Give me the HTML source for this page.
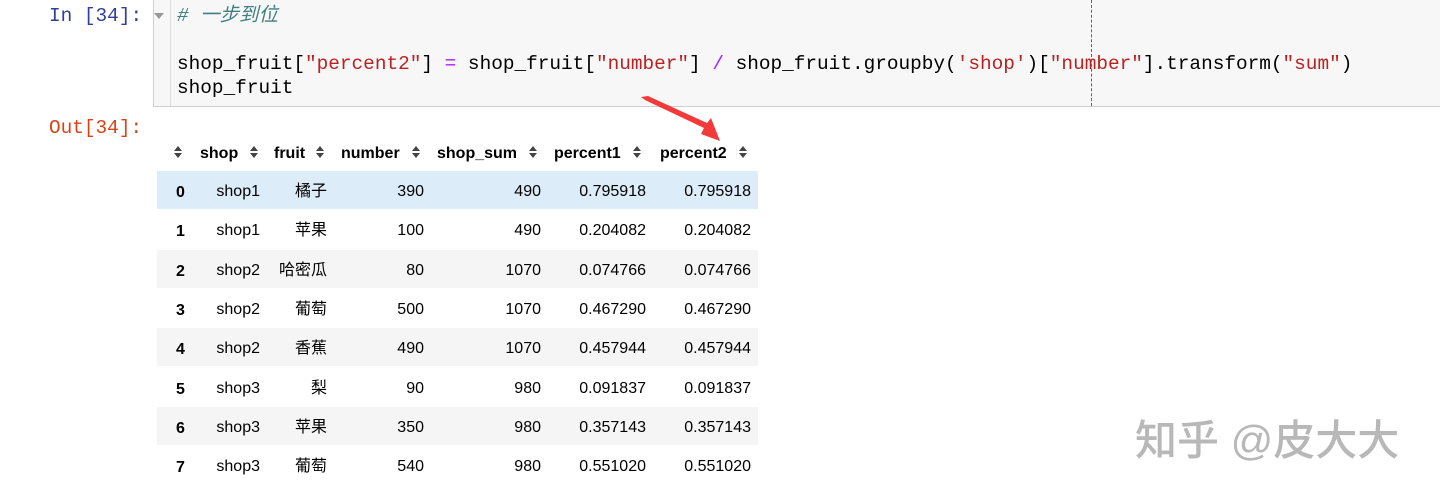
<!DOCTYPE html>
<html><head><meta charset="utf-8"><style>
body{margin:0;width:1440px;height:497px;background:#fff;position:relative;overflow:hidden;font-family:"Liberation Sans","Noto Sans CJK SC",sans-serif}
.mono{font-family:"Liberation Mono","Noto Sans CJK SC",monospace;font-size:19.4px;line-height:24px;position:absolute;white-space:pre}
.cell{position:absolute;top:-2px;left:153px;width:1300px;height:107px;background:#f7f7f7;border:1px solid #cfcfcf}
.gut{position:absolute;left:170px;top:0;width:1px;height:106px;background:#ddd}
.s{color:#ba2121}.o{color:#aa22ff}.c{color:#408080;font-style:italic}
.row{position:absolute;left:157px;width:601px;height:38px;border-bottom:1px solid #fff}
.t{position:absolute;font-size:16px;line-height:20px;height:20px;color:#000;white-space:nowrap}
.h{font-weight:bold}
.ic{position:absolute;width:8px;height:12px}
</style></head><body>
<div class="mono" style="left:49px;top:4px;color:#303f9f">In [34]:</div>
<div class="cell"></div><div class="gut"></div>
<div style="position:absolute;left:154px;top:13px;width:0;height:0;border-left:5px solid transparent;border-right:5px solid transparent;border-top:6px solid #999"></div>
<div class="mono c" style="left:177px;top:4px">#&nbsp;一步到位</div>
<div class="mono" style="left:177px;top:52px">shop_fruit[<span class="s">"percent2"</span>] <span class="o">=</span> shop_fruit[<span class="s">"number"</span>] <span class="o">/</span> shop_fruit.groupby(<span class="s">'shop'</span>)[<span class="s">"number"</span>].transform(<span class="s">"sum"</span>)</div>
<div class="mono" style="left:177px;top:76px">shop_fruit</div>
<div style="position:absolute;left:1091px;top:0;height:106px;border-left:1.5px dashed #c33"></div>
<div class="mono" style="left:49px;top:116px;color:#d84315">Out[34]:</div>
<svg style="position:absolute;left:0;top:0" width="1440" height="200">
<polygon points="641,97 645,100 704,128 701,134 720,141 711,118 707,123 648,96" fill="#f23a3a"/>
</svg>
<div id="tbl"></div>
<div style="position:absolute;left:1135px;top:415px;font-size:42px;line-height:52px;color:#b8b8b8;font-weight:500">知乎 @皮大大</div>
<script>
var hdr=[[200,'shop'],[274,'fruit'],[341,'number'],[437,'shop_sum'],[554,'percent1'],[660,'percent2']];
var icons=[178,254,320,416,533,637,743];
var out='';
hdr.forEach(function(h){out+='<div class="t h" style="left:'+h[0]+'px;top:144px">'+h[1]+'</div>';});
icons.forEach(function(x){out+='<svg class="ic" style="left:'+(x-4)+'px;top:146px" viewBox="0 0 8 12"><path d="M0 5L4 0L8 5Z M0 7L4 12L8 7Z" fill="#444"/></svg>';});
var rows=[['shop1','橘子',390,490,'0.795918'],['shop1','苹果',100,490,'0.204082'],['shop2','哈密瓜',80,1070,'0.074766'],['shop2','葡萄',500,1070,'0.467290'],['shop2','香蕉',490,1070,'0.457944'],['shop3','梨',90,980,'0.091837'],['shop3','苹果',350,980,'0.357143'],['shop3','葡萄',540,980,'0.551020']];
var rights=[260,327,424,541,646,751];
rows.forEach(function(r,i){
 var top=171+i*39.3;
 var bg=i==0?'#dcecf8':(i%2==0?'#f5f5f5':'#fff');
 out+='<div class="row" style="top:'+top+'px;background:'+bg+'"></div>';
 var ty=top+11;
 out+='<div class="t h" style="left:176px;top:'+(ty+1)+'px">'+i+'</div>';
 var vals=[r[0],r[1],r[2],r[3],r[4],r[4]];
 vals.forEach(function(v,j){
  var st=j==1?'top:'+(ty-3)+'px;font-family:\'Noto Sans CJK SC\',sans-serif':'top:'+ty+'px';
  out+='<div class="t" style="right:'+(1440-rights[j])+'px;'+st+'">'+v+'</div>';});
});
document.getElementById('tbl').innerHTML=out;
</script>
</body></html>
